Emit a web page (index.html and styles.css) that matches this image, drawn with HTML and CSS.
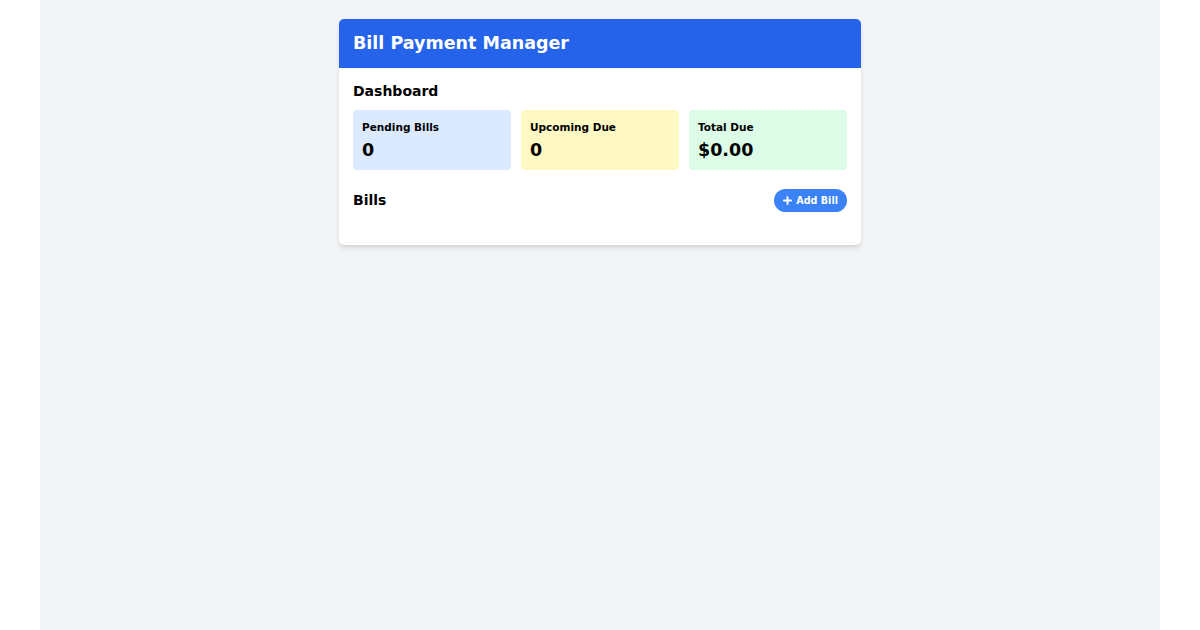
FILE: index.html
```html
<!DOCTYPE html>
<html lang="en">
<head>
  <meta charset="UTF-8">
  <meta name="viewport" content="width=device-width, initial-scale=1.0">
  <title>Bill Payment Manager</title>
  <link rel="stylesheet" href="styles.css">
</head>
<body>
<div class="page">
  <div class="app-card">
    <header class="app-header">
      <h1>Bill Payment Manager</h1>
    </header>
    <main class="app-body">
      <h2 class="section-title">Dashboard</h2>
      <div class="stats">
        <div class="stat stat-blue">
          <div class="stat-label">Pending Bills</div>
          <div class="stat-value" id="pendingCount">0</div>
        </div>
        <div class="stat stat-yellow">
          <div class="stat-label">Upcoming Due</div>
          <div class="stat-value" id="upcomingCount">0</div>
        </div>
        <div class="stat stat-green">
          <div class="stat-label">Total Due</div>
          <div class="stat-value" id="totalDue">$0.00</div>
        </div>
      </div>

      <div class="bills-head">
        <h2 class="section-title">Bills</h2>
        <button type="button" class="add-btn">
          <svg width="9" height="9" viewBox="0 0 10 10" aria-hidden="true">
            <path d="M5 1v8M1 5h8" stroke="#fff" stroke-width="2" stroke-linecap="round"/>
          </svg>
          Add Bill
        </button>
      </div>
      <div class="bill-list" id="billList"></div>
    </main>
  </div>
</div>
</body>
</html>
```

FILE: styles.css
```css
body {
  margin: 0;
  padding: 0;
  background-color: #fff;
  font-family: "DejaVu Sans", sans-serif;
  color: #000;
}
.page {
  width: 1120px;
  min-height: 630px;
  margin: 0 auto;
  padding-top: 19px;
  background-color: #f3f4f6;
  box-sizing: border-box;
}
.app-card {
  width: 522px;
  margin: 0 auto;
  background-color: #fff;
  border-radius: 5px;
  overflow: hidden;
  box-shadow: 0 4px 6px -1px rgba(0, 0, 0, 0.1), 0 2px 4px -2px rgba(0, 0, 0, 0.1);
}
.app-header {
  background-color: #2563eb;
  padding: 14px 14px;
}
.app-header h1 {
  margin: 0;
  font-size: 17.5px;
  line-height: 21px;
  font-weight: bold;
  color: #fff;
}
.app-body {
  padding: 14px;
}
.section-title {
  margin: 0;
  font-size: 14px;
  line-height: 18px;
  font-weight: bold;
}
.stats {
  display: grid;
  grid-template-columns: repeat(3, 1fr);
  gap: 10px;
  margin-top: 10px;
}
.stat {
  height: 60px;
  padding: 10px 9px 9px;
  border-radius: 4px;
  box-sizing: border-box;
}
.stat-blue {
  background-color: #dbeafe;
}
.stat-yellow {
  background-color: #fef9c3;
}
.stat-green {
  background-color: #dcfce7;
}
.stat-label {
  font-size: 10.5px;
  line-height: 14px;
  font-weight: bold;
}
.stat-value {
  margin-top: 6px;
  font-size: 17.5px;
  line-height: 21px;
  font-weight: bold;
}
.bills-head {
  display: flex;
  justify-content: space-between;
  align-items: center;
  margin-top: 19px;
}
.bills-head .section-title {
  margin-top: -1px;
}
.add-btn {
  display: flex;
  align-items: center;
  gap: 4px;
  height: 23px;
  padding: 0 9px 0 9px;
  border: none;
  border-radius: 12px;
  background-color: #3b82f6;
  color: #fff;
  font-family: "DejaVu Sans", sans-serif;
  font-size: 9.6px;
  font-weight: bold;
  cursor: pointer;
}
.add-btn:hover {
  background-color: #2563eb;
}
.bill-list {
  margin-top: 19px;
}
```
